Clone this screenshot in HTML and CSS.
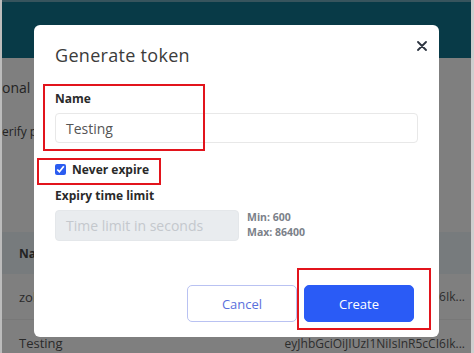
FILE: index.html
```html
<!DOCTYPE html>
<html>
<head>
<meta charset="utf-8">
<link rel="stylesheet" href="styles.css">
</head>
<body>
<div class="page">
  <header class="topbar"></header>
  <main class="content">
    <div class="section-title">onal C</div>
    <div class="section-desc">erify p</div>
    <div class="table">
      <div class="thead"><span class="cell-name">Na</span></div>
      <div class="trow"><span class="cell-name">zoh</span><span class="cell-token">l6Ik...</span></div>
      <div class="trow last"><span class="cell-name">Testing</span><span class="cell-token">eyJhbGciOiJIUzI1NiIsInR5cCI6Ik...</span></div>
    </div>
  </main>
  <div class="backdrop"></div>

  <div class="modal">
    <div class="modal-head">
      <h2 class="modal-title">Generate token</h2>
      <button class="close" aria-label="Close">
        <svg width="10" height="10" viewBox="0 0 10 10"><path d="M1 1L9 9M9 1L1 9" stroke="#2c3440" stroke-width="1.8" stroke-linecap="round"/></svg>
      </button>
    </div>
    <label class="label name-label">Name</label>
    <div class="input name-input">Testing</div>
    <label class="check-row"><input type="checkbox" checked class="check"><span>Never expire</span></label>
    <label class="label expiry-label">Expiry time limit</label>
    <div class="expiry-row">
      <div class="input disabled">Time limit in seconds</div>
      <div class="limits"><div>Min: 600</div><div>Max: 86400</div></div>
    </div>
    <div class="footer">
      <button class="btn btn-cancel">Cancel</button>
      <button class="btn btn-create">Create</button>
    </div>

    <div class="mark mark-name"></div>
    <div class="mark mark-check"></div>
    <div class="mark mark-create"></div>
  </div>
</div>
</body>
</html>
```

FILE: styles.css
```css
* { box-sizing: border-box; }
html, body { margin: 0; padding: 0; }
body {
  width: 474px;
  height: 353px;
  overflow: hidden;
  font-family: "Open Sans", "Liberation Sans", sans-serif;
  background: #fff;
}
.page {
  position: relative;
  width: 474px;
  height: 353px;
  overflow: hidden;
  border-left: 2px solid #bcbcbc;
  border-right: 3px solid #cfcfcf;
}
.topbar {
  height: 58px;
  background: #11748f;
  border-top: 2px solid #6fa9bb;
}
.content {
  padding: 20px 0 0 0;
  color: #474747;
}
.section-title {
  font-size: 14px;
  font-weight: 500;
  line-height: 20px;
}
.section-desc {
  font-size: 12px;
  line-height: 18px;
  margin-top: 25px;
}
.table {
  margin-top: 91px;
}
.thead {
  height: 42px;
  display: flex;
  align-items: center;
  padding-left: 17px;
  background: #eef6fb;
  font-size: 12px;
  font-weight: 700;
}
.trow {
  height: 46px;
  display: flex;
  align-items: center;
  padding: 0 6px 0 17px;
  font-size: 13px;
  font-weight: 500;
  border-bottom: 1px solid #f1f1f1;
  color: #555;
}
.trow .cell-token { margin-left: auto; }
.trow.last { border-bottom: none; }
.cell-token { font-size: 12px; color: #5a5a5a; }
.backdrop {
  position: absolute;
  inset: 0;
  background: rgba(0, 0, 0, 0.5);
}

.modal {
  position: absolute;
  left: 32px;
  top: 25px;
  width: 405px;
  height: 312px;
  background: #fff;
  border-radius: 6px;
  padding: 18px 21px 15px 21px;
  display: flex;
  flex-direction: column;
}
.modal-head {
  display: flex;
  justify-content: space-between;
  align-items: flex-start;
  height: 24px;
}
.modal-title {
  margin: 0;
  font-size: 18px;
  font-weight: 400;
  line-height: 24px;
  color: #3b3b3b;
  letter-spacing: 0.3px;
}
.close {
  border: none;
  background: none;
  padding: 0;
  margin: -3px -10px 0 0;
  width: 12px;
  height: 12px;
  display: flex;
  align-items: center;
  justify-content: center;
}
.label {
  display: block;
  font-size: 12px;
  font-weight: 700;
  line-height: 16px;
  color: #2a2a2a;
}
.name-label { margin-top: 24px; }
.input {
  height: 30px;
  border: 1px solid #e8e8e8;
  border-radius: 4px;
  padding: 0 10px;
  display: flex;
  align-items: center;
  font-size: 14px;
  color: #555;
}
.name-input { margin-top: 6px; }
.check-row {
  margin-top: 17px;
  height: 18px;
  display: flex;
  align-items: center;
  gap: 6px;
  font-size: 12px;
  font-weight: 700;
  color: #2a2a2a;
}
.check {
  margin: 0;
  width: 11px;
  height: 11px;
  accent-color: #2b5cf0;
}
.expiry-label { margin-top: 10px; }
.expiry-row {
  margin-top: 6px;
  display: flex;
  align-items: flex-start;
  gap: 8px;
}
.input.disabled {
  width: 184px;
  height: 31px;
  background: #e9ecef;
  border-color: #e4e7ea;
  color: #c4c8cd;
  font-size: 14px;
}
.limits {
  font-size: 10.5px;
  font-weight: 700;
  color: #7b8189;
  line-height: 15px;
}
.footer {
  margin-top: auto;
  display: flex;
  justify-content: flex-end;
  gap: 7px;
  padding-right: 4px;
}
.btn {
  width: 110px;
  height: 37px;
  border-radius: 5px;
  font-family: inherit;
  font-size: 13px;
  font-weight: 500;
}
.btn-cancel {
  background: #fff;
  border: 1px solid #b9c2f2;
  color: #5a6fdc;
}
.btn-create {
  background: #2a5bf6;
  border: 1px solid #2a5bf6;
  color: #fff;
}
.mark {
  position: absolute;
  border: 2px solid #e2141c;
}
.mark-name { left: 9px; top: 59px; width: 162px; height: 67px; }
.mark-check { left: 3px; top: 133px; width: 124px; height: 27px; }
.mark-create { left: 263px; top: 243px; width: 134px; height: 62px; }
```
